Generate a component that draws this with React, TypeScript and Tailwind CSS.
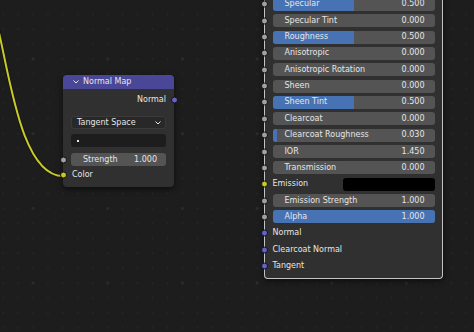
import type {FC} from "react";

type Row =
	| {kind: "slider"; label: string; value: number; fill?: boolean; socket: "gray"}
	| {kind: "color"; label: string; socket: "yellow"}
	| {kind: "vector"; label: string; socket: "purple"};

const rows: Row[] = [
	{kind: "slider", label: "Metallic", value: 0, socket: "gray"},
	{kind: "slider", label: "Specular", value: 0.5, fill: true, socket: "gray"},
	{kind: "slider", label: "Specular Tint", value: 0, socket: "gray"},
	{kind: "slider", label: "Roughness", value: 0.5, fill: true, socket: "gray"},
	{kind: "slider", label: "Anisotropic", value: 0, socket: "gray"},
	{kind: "slider", label: "Anisotropic Rotation", value: 0, socket: "gray"},
	{kind: "slider", label: "Sheen", value: 0, socket: "gray"},
	{kind: "slider", label: "Sheen Tint", value: 0.5, fill: true, socket: "gray"},
	{kind: "slider", label: "Clearcoat", value: 0, socket: "gray"},
	{kind: "slider", label: "Clearcoat Roughness", value: 0.03, fill: true, socket: "gray"},
	{kind: "slider", label: "IOR", value: 1.45, socket: "gray"},
	{kind: "slider", label: "Transmission", value: 0, socket: "gray"},
	{kind: "color", label: "Emission", socket: "yellow"},
	{kind: "slider", label: "Emission Strength", value: 1, socket: "gray"},
	{kind: "slider", label: "Alpha", value: 1, fill: true, socket: "gray"},
	{kind: "vector", label: "Normal", socket: "purple"},
	{kind: "vector", label: "Clearcoat Normal", socket: "purple"},
	{kind: "vector", label: "Tangent", socket: "purple"},
];

const socketColor = {
	gray: "bg-[#a1a1a1]",
	yellow: "bg-[#c7c729]",
	purple: "bg-[#6363c7]",
};

const Socket: FC<{color: keyof typeof socketColor; className: string}> = ({color, className}) => (
	<span
		className={`absolute top-1/2 -translate-y-1/2 w-[7px] h-[7px] rounded-full border border-[#111] ${socketColor[color]} ${className}`}
	/>
);

const Slider: FC<{label: string; value: number; fill?: boolean}> = ({label, value, fill}) => {
	const pct = Math.min(value, 1) * 100;
	return (
		<div className="relative flex-1 h-[13px] rounded-[3px] bg-[#545454] overflow-hidden">
			{fill && (
				<div className="absolute inset-y-0 left-0 bg-[#4772b3]" style={{width: `${pct}%`}} />
			)}
			<div className="relative flex items-center justify-between h-full pl-[12px] pr-[10px]">
				<span>{label}</span>
				<span>{value.toFixed(3)}</span>
			</div>
		</div>
	);
};

export default function App() {
	return (
		<div
			className="relative w-[474px] h-[332px] overflow-hidden bg-[#1d1d1d] text-[8px] leading-none text-[#e6e6e6]"
			style={{fontFamily: '"DejaVu Sans", "Liberation Sans", sans-serif'}}
		>
			{/* grid dots */}
			<div className="absolute inset-0 bg-[radial-gradient(circle,#262626_0.8px,transparent_1.2px)] bg-[size:14.94px_14.94px] bg-[position:-4.35px_6.71px]" />
			<div className="absolute inset-0 bg-[radial-gradient(circle,#2d2d2d_1px,transparent_1.6px)] bg-[size:74.7px_74.7px] bg-[position:-4.35px_21.65px]" />

			{/* wire */}
			<svg className="absolute inset-0 pointer-events-none" width={474} height={332}>
				<path d="M -15 0 C 5 0, 8 176, 63 176" fill="none" stroke="#111" strokeWidth={3.5} />
				<path d="M -15 0 C 5 0, 8 176, 63 176" fill="none" stroke="#c9c92c" strokeWidth={2} />
			</svg>

			{/* Normal Map node */}
			<div className="absolute left-[63px] top-[75px] w-[111px] h-[112px] rounded-[4px] bg-[#303030] shadow-[0_2px_6px_rgba(0,0,0,0.6)]">
				<div className="flex items-center h-[14px] pl-[10px] gap-[4px] rounded-t-[4px] bg-[#4a4799]">
					<svg width="6" height="4" viewBox="0 0 6 4">
						<path d="M0.5 0.5 L3 3 L5.5 0.5" fill="none" stroke="#e6e6e6" strokeWidth="1" />
					</svg>
					<span>Normal Map</span>
				</div>
				<div className="flex flex-col">
					<div className="relative flex items-center justify-end h-[16px] mt-[3px] pr-[8px]">
						<span>Normal</span>
						<Socket color="purple" className="right-[-3.5px]" />
					</div>
					<div className="flex items-center justify-between h-[13px] mx-[8px] mt-[8px] pl-[5px] pr-[4px] rounded-[3px] bg-[#282828] border border-[#3a3a3a]">
						<span>Tangent Space</span>
						<svg width="6" height="4" viewBox="0 0 6 4">
							<path d="M0.5 0.5 L3 3 L5.5 0.5" fill="none" stroke="#e6e6e6" strokeWidth="1" />
						</svg>
					</div>
					<div className="flex items-center h-[13px] mx-[8px] mt-[5px] pl-[6px] rounded-[3px] bg-[#1d1d1d]">
						<span className="w-[2px] h-[2px] bg-[#e6e6e6]" />
					</div>
					<div className="relative flex mx-[8px] mt-[6px]">
						<div className="flex flex-1 items-center justify-between h-[13px] pl-[12px] pr-[9px] rounded-[3px] bg-[#545454]">
							<span>Strength</span>
							<span>1.000</span>
						</div>
						<Socket color="gray" className="left-[-11.5px]" />
					</div>
					<div className="relative flex items-center h-[16px] mt-[1px] pl-[9px]">
						<span>Color</span>
						<Socket color="yellow" className="left-[-3.5px]" />
					</div>
				</div>
			</div>

			{/* Principled BSDF node (partially visible) */}
			<div className="absolute left-[264px] top-[-20.24px] w-[179px] pb-[3.76px] rounded-b-[4px] bg-[#303030] border-x border-b border-[#c4c4c4] shadow-[0_2px_6px_rgba(0,0,0,0.6)]">
				{rows.map((row) => (
					<div key={row.label} className="relative flex items-center h-[16.36px] px-[7.5px]">
						<Socket color={row.socket} className="left-[-4px]" />
						{row.kind === "slider" && <Slider label={row.label} value={row.value} fill={row.fill} />}
						{row.kind === "color" && (
							<>
								<span className="w-[70px]">{row.label}</span>
								<div className="flex-1 h-[13px] rounded-[3px] bg-black" />
							</>
						)}
						{row.kind === "vector" && <span>{row.label}</span>}
					</div>
				))}
			</div>
		</div>
	);
}
